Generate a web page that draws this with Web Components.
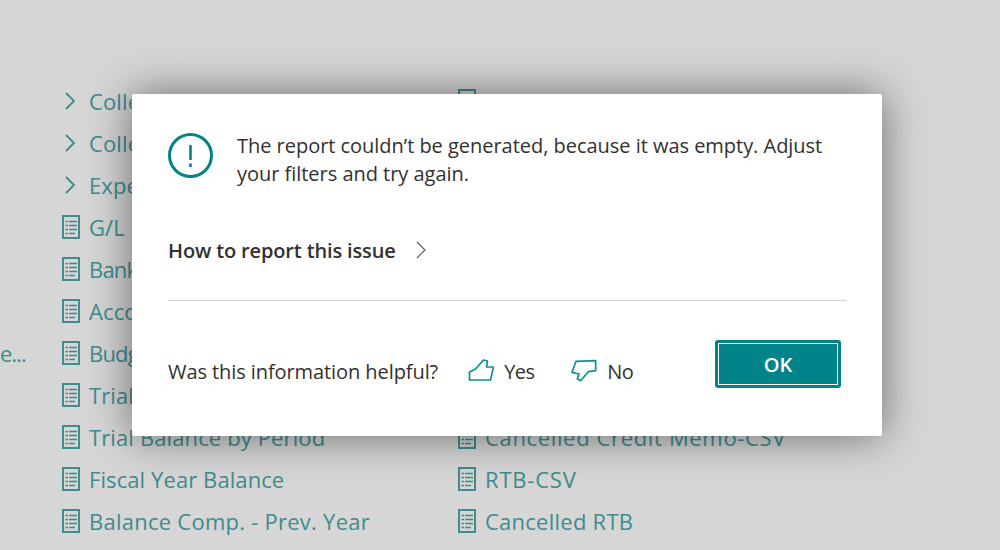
<!DOCTYPE html>
<html>
<head>
<meta charset="utf-8">
<title>Report</title>
<style>
    html, body { margin: 0; height: 100%; }
    body { overflow: hidden; background: #d6d6d6; font-family: "Open Sans", "Noto Sans", sans-serif; }
</style>
</head>
<body>
<report-page>
    <report-list slot="far"><report-link plain style="--track:-1px">e...</report-link></report-list>
    <report-list slot="left">
        <report-link icon="chevron">Collection Reports</report-link>
        <report-link icon="chevron">Collection Letters</report-link>
        <report-link icon="chevron">Expenses</report-link>
        <report-link>G/L Register</report-link>
        <report-link style="--track:-.8px">Bank Detail</report-link>
        <report-link>Account Schedule</report-link>
        <report-link style="--track:-.8px">Budget</report-link>
        <report-link>Trial Balance</report-link>
        <report-link>Trial Balance by Period</report-link>
        <report-link style="--track:.09px">Fiscal Year Balance</report-link>
        <report-link style="--track:.25px">Balance Comp. - Prev. Year</report-link>
    </report-list>
    <report-list slot="right">
        <report-link>FPC Sales Vat</report-link>
        <report-link hidden-row></report-link>
        <report-link hidden-row></report-link>
        <report-link hidden-row></report-link>
        <report-link hidden-row></report-link>
        <report-link hidden-row></report-link>
        <report-link hidden-row></report-link>
        <report-link hidden-row></report-link>
        <report-link style="--track:.65px">Cancelled Credit Memo-CSV</report-link>
        <report-link style="--track:.8px">RTB-CSV</report-link>
        <report-link style="--track:.25px">Cancelled RTB</report-link>
    </report-list>
    <report-dialog slot="dialog">
        The report couldn’t be generated, because it was empty. Adjust your filters and try again.
    </report-dialog>
</report-page>

<script>
const CHEVRON = '<svg width="18" height="18" viewBox="0 0 18 18" fill="none" stroke="currentColor" stroke-width="1.800"><path d="M4 1l8 8-8 8"/></svg>';
const SHEET = `<svg width="18" height="24" viewBox="0 0 18 24" fill="none" stroke="currentColor"><rect x="1" y="1" width="16" height="22" stroke-width="2"/><path d="M3.500 6.500h2.500M7 6.500h8M3.500 10.500h2.500M7 10.500h8M3.500 14.500h2.500M7 14.500h8M3.500 18.500h2.500M7 18.500h6" stroke-width="1.300"/></svg>`;

class ReportPage extends HTMLElement {
    constructor() {
        super();
        this.attachShadow({ mode: 'open' });
        this.shadowRoot.innerHTML = `
            <style>
                :host {
                    display: block;
                    position: relative;
                    width: 1000px;
                    height: 550px;
                    overflow: hidden;
                }
                .columns {
                    display: grid;
                    grid-template-columns: 62px 396px 1fr;
                    padding-top: 80px;
                }
                .far { padding-top: 252px; }
                .overlay {
                    position: absolute;
                    inset: 0;
                    display: flex;
                    align-items: flex-start;
                    padding: 94px 0 0 132px;
                }
            </style>
            <div class="columns">
                <div class="far"><slot name="far"></slot></div>
                <slot name="left"></slot>
                <slot name="right"></slot>
            </div>
            <div class="overlay"><slot name="dialog"></slot></div>
        `;
    }
}

class ReportList extends HTMLElement {
    constructor() {
        super();
        this.attachShadow({ mode: 'open' });
        this.shadowRoot.innerHTML = `
            <style>
                :host { display: flex; flex-direction: column; }
            </style>
            <slot></slot>
        `;
    }
}

class ReportLink extends HTMLElement {
    constructor() {
        super();
        this.attachShadow({ mode: 'open' });
        const chevron = this.getAttribute('icon') === 'chevron';
        const plain = this.hasAttribute('plain');
        const blank = this.hasAttribute('hidden-row');
        this.shadowRoot.innerHTML = `
            <style>
                :host {
                    display: flex;
                    align-items: center;
                    height: 42px;
                    gap: 9px;
                    color: #3f8b8d;
                    font-size: 22px;
                    white-space: nowrap;
                }
                .icon { display: flex; width: 18px; justify-content: center; }
                .text { letter-spacing: var(--track, 0.12px); }
            </style>
            ${plain || blank ? '' : `<span class="icon">${chevron ? CHEVRON : SHEET}</span>`}
            <span class="text"><slot></slot></span>
        `;
    }
}

class ReportDialog extends HTMLElement {
    constructor() {
        super();
        this.attachShadow({ mode: 'open' });
        this.shadowRoot.innerHTML = `
            <style>
                :host {
                    display: block;
                    box-sizing: border-box;
                    width: 750px;
                    height: 342px;
                    padding: 39px 36px 0;
                    background: #fff;
                    border-radius: 2px;
                    box-shadow: 0 0 44px rgba(0,0,0,0.5);
                    color: #323130;
                    font-size: 20px;
                }
                .message { display: flex; gap: 24px; }
                .message svg { flex: none; }
                .message p { margin: -1px 0 0; width: 600px; line-height: 28px; letter-spacing: -0.03px; }
                .how {
                    display: flex;
                    align-items: center;
                    gap: 20px;
                    height: 28px;
                    margin-top: 48px;
                    font-weight: 600;
                    color: #323130;
                    letter-spacing: -0.14px;
                }
                hr { border: 0; border-top: 1px solid #d2d0ce; margin: 36px 0 0; width: 678px; }
                .feedback {
                    display: flex;
                    align-items: flex-start;
                    margin-top: 39px;
                    width: 673px;
                }
                .ask {
                    display: flex;
                    align-items: center;
                    height: 48px;
                    margin-top: 7px;
                    letter-spacing: -0.08px;
                }
                .vote { display: flex; align-items: center; gap: 10px; margin-left: 30px; letter-spacing: -0.6px; }
                .vote + .vote { margin-left: 37px; }
                .ok {
                    margin-left: auto;
                    width: 126px;
                    height: 48px;
                    box-sizing: border-box;
                    padding: 0;
                    border: 3px solid #008489;
                    border-radius: 3px;
                    box-shadow: inset 0 0 0 1px #fff;
                    background: #008489;
                    color: #fff;
                    font: 600 20px "Open Sans", sans-serif;
                }
            </style>
            <div class="message">
                <svg width="45" height="45" viewBox="0 0 45 45" fill="none" stroke="#008489" stroke-width="3">
                    <circle cx="22.500" cy="22.500" r="21"/>
                    <path d="M22.500 12v15M22.500 30.500v3.500" stroke-width="2.600"/>
                </svg>
                <p><slot></slot></p>
            </div>
            <div class="how">
                <span>How to report this issue</span>
                <svg width="10" height="18" viewBox="0 0 10 18" fill="none" stroke="#555" stroke-width="1.100"><path d="M1 1l8 8-8 8"/></svg>
            </div>
            <hr>
            <div class="feedback">
                <div class="ask">
                    <span>Was this information helpful?</span>
                    <span class="vote">
                        <svg width="26" height="24" viewBox="0 0 26 24" fill="none" stroke="#0f8f96" stroke-width="1.700" stroke-linejoin="round"><path d="M1.500 21V13l6-3 8-9 4 1-1 6h7l-3 13z"/></svg>
                        Yes
                    </span>
                    <span class="vote">
                        <svg width="26" height="24" viewBox="0 0 26 24" fill="none" stroke="#0f8f96" stroke-width="1.700" stroke-linejoin="round"><path d="M1 13.300 5 2.300l19.700-.6v10l-7.400 1-7.600 9-3.400-1.700L8 15z"/></svg>
                        No
                    </span>
                </div>
                <button class="ok">OK</button>
            </div>
        `;
    }
}

customElements.define('report-page', ReportPage);
customElements.define('report-list', ReportList);
customElements.define('report-link', ReportLink);
customElements.define('report-dialog', ReportDialog);
</script>
</body>
</html>
